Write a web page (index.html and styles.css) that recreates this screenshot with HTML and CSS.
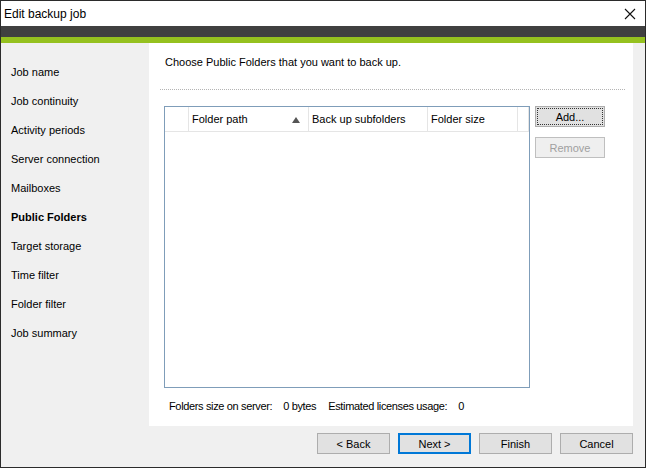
FILE: index.html
```html
<!DOCTYPE html>
<html lang="en">
<head>
    <meta charset="UTF-8">
    <title>Edit backup job</title>
    <link rel="stylesheet" href="styles.css">
</head>
<body>
    <div class="window">
        <div class="titlebar">
            <span class="title">Edit backup job</span>
            <svg class="close" width="12" height="12" viewBox="0 0 12 12">
                <path d="M1 1 L11 11 M11 1 L1 11" stroke="#111" stroke-width="1.1" fill="none"/>
            </svg>
        </div>
        <div class="darkbar"></div>
        <div class="greenbar"></div>
        <div class="main">
            <ul class="steps">
                <li>Job name</li>
                <li>Job continuity</li>
                <li>Activity periods</li>
                <li>Server connection</li>
                <li>Mailboxes</li>
                <li class="current">Public Folders</li>
                <li>Target storage</li>
                <li>Time filter</li>
                <li>Folder filter</li>
                <li>Job summary</li>
            </ul>
            <div class="page">
                <p class="intro">Choose Public Folders that you want to back up.</p>
                <div class="sep"></div>
                <div class="listarea">
                    <div class="list">
                        <div class="list-head">
                            <div class="col col-check"></div>
                            <div class="col col-path">Folder path<span class="sort"></span></div>
                            <div class="col col-sub">Back up subfolders</div>
                            <div class="col col-size">Folder size</div>
                            <div class="col col-rest"></div>
                        </div>
                    </div>
                    <div class="side-buttons">
                        <button class="btn focused">Add...</button>
                        <button class="btn" disabled>Remove</button>
                    </div>
                </div>
                <div class="status">
                    <span>Folders size on server:</span>
                    <span class="val">0 bytes</span>
                    <span>Estimated licenses usage:</span>
                    <span class="val">0</span>
                </div>
            </div>
            <div class="gutter"></div>
        </div>
        <div class="footer">
            <button class="btn">&lt; Back</button>
            <button class="btn default">Next &gt;</button>
            <button class="btn">Finish</button>
            <button class="btn">Cancel</button>
        </div>
    </div>
</body>
</html>
```

FILE: styles.css
```css
body {
    margin: 0;
    font-family: "Liberation Sans", Arial, sans-serif;
    font-size: 11px;
    color: #000;
}
.window {
    box-sizing: border-box;
    width: 646px;
    height: 468px;
    border: 1px solid #2b2b2b;
    background-color: #f0f0f0;
    display: flex;
    flex-direction: column;
}
.titlebar {
    height: 25px;
    background-color: #fff;
    display: flex;
    align-items: center;
    justify-content: space-between;
    padding: 0 9px 0 3px;
}
.titlebar .title {
    font-size: 12px;
}
.darkbar {
    height: 11px;
    background-color: #404040;
}
.greenbar {
    height: 6px;
    background-color: #95c11f;
}
.main {
    display: flex;
    height: 383px;
}
.steps {
    width: 148px;
    margin: 0;
    padding: 15px 0 0 0;
    list-style: none;
}
.steps li {
    height: 29px;
    line-height: 29px;
    padding-left: 10px;
}
.steps .current {
    font-weight: bold;
}
.page {
    width: 484px;
    background-color: #fff;
    display: flex;
    flex-direction: column;
}
.gutter {
    flex: 1;
}
.intro {
    margin: 12px 0 0 16px;
    line-height: 15px;
}
.sep {
    margin: 19px 8px 0 11px;
    border-top: 1px dotted #b4b4b4;
}
.listarea {
    display: flex;
    margin: 16px 0 0 15px;
}
.list {
    box-sizing: border-box;
    width: 366px;
    height: 282px;
    border: 1px solid #7f9db9;
    background-color: #fff;
}
.list-head {
    display: flex;
    height: 24px;
    border-bottom: 1px solid #e5e5e5;
}
.list-head .col {
    box-sizing: border-box;
    border-right: 1px solid #e5e5e5;
    line-height: 25px;
    padding-left: 3px;
}
.col-check { width: 24px; }
.col-path { width: 120px; position: relative; }
.col-sub { width: 119px; }
.col-size { width: 90px; }
.col-rest { flex: 1; }
.col-path .sort {
    position: absolute;
    right: 8px;
    top: 10px;
    width: 0;
    height: 0;
    border-left: 4px solid transparent;
    border-right: 4px solid transparent;
    border-bottom: 6px solid #555;
}
.side-buttons {
    display: flex;
    flex-direction: column;
    gap: 10px;
    margin-left: 5px;
}
.btn {
    box-sizing: border-box;
    width: 70px;
    height: 21px;
    padding: 0;
    border: 1px solid #adadad;
    background-color: #e1e1e1;
    font-family: inherit;
    font-size: 11px;
    color: #000;
}
.btn.focused {
    outline: 1px dotted #333;
    outline-offset: -3px;
}
.btn:disabled {
    background-color: #efefef;
    border-color: #bfbfbf;
    color: #a0a0a0;
}
.status {
    display: flex;
    margin: 12px 0 0 20px;
    letter-spacing: -0.35px;
}
.status span {
    margin-right: 11px;
}
.status .val {
    margin-right: 12px;
}
.footer {
    display: flex;
    justify-content: flex-end;
    gap: 8px;
    padding: 7px 12px 0 0;
}
.footer .btn {
    width: 73px;
}
.footer .default {
    border: 2px solid #0078d7;
}
```
